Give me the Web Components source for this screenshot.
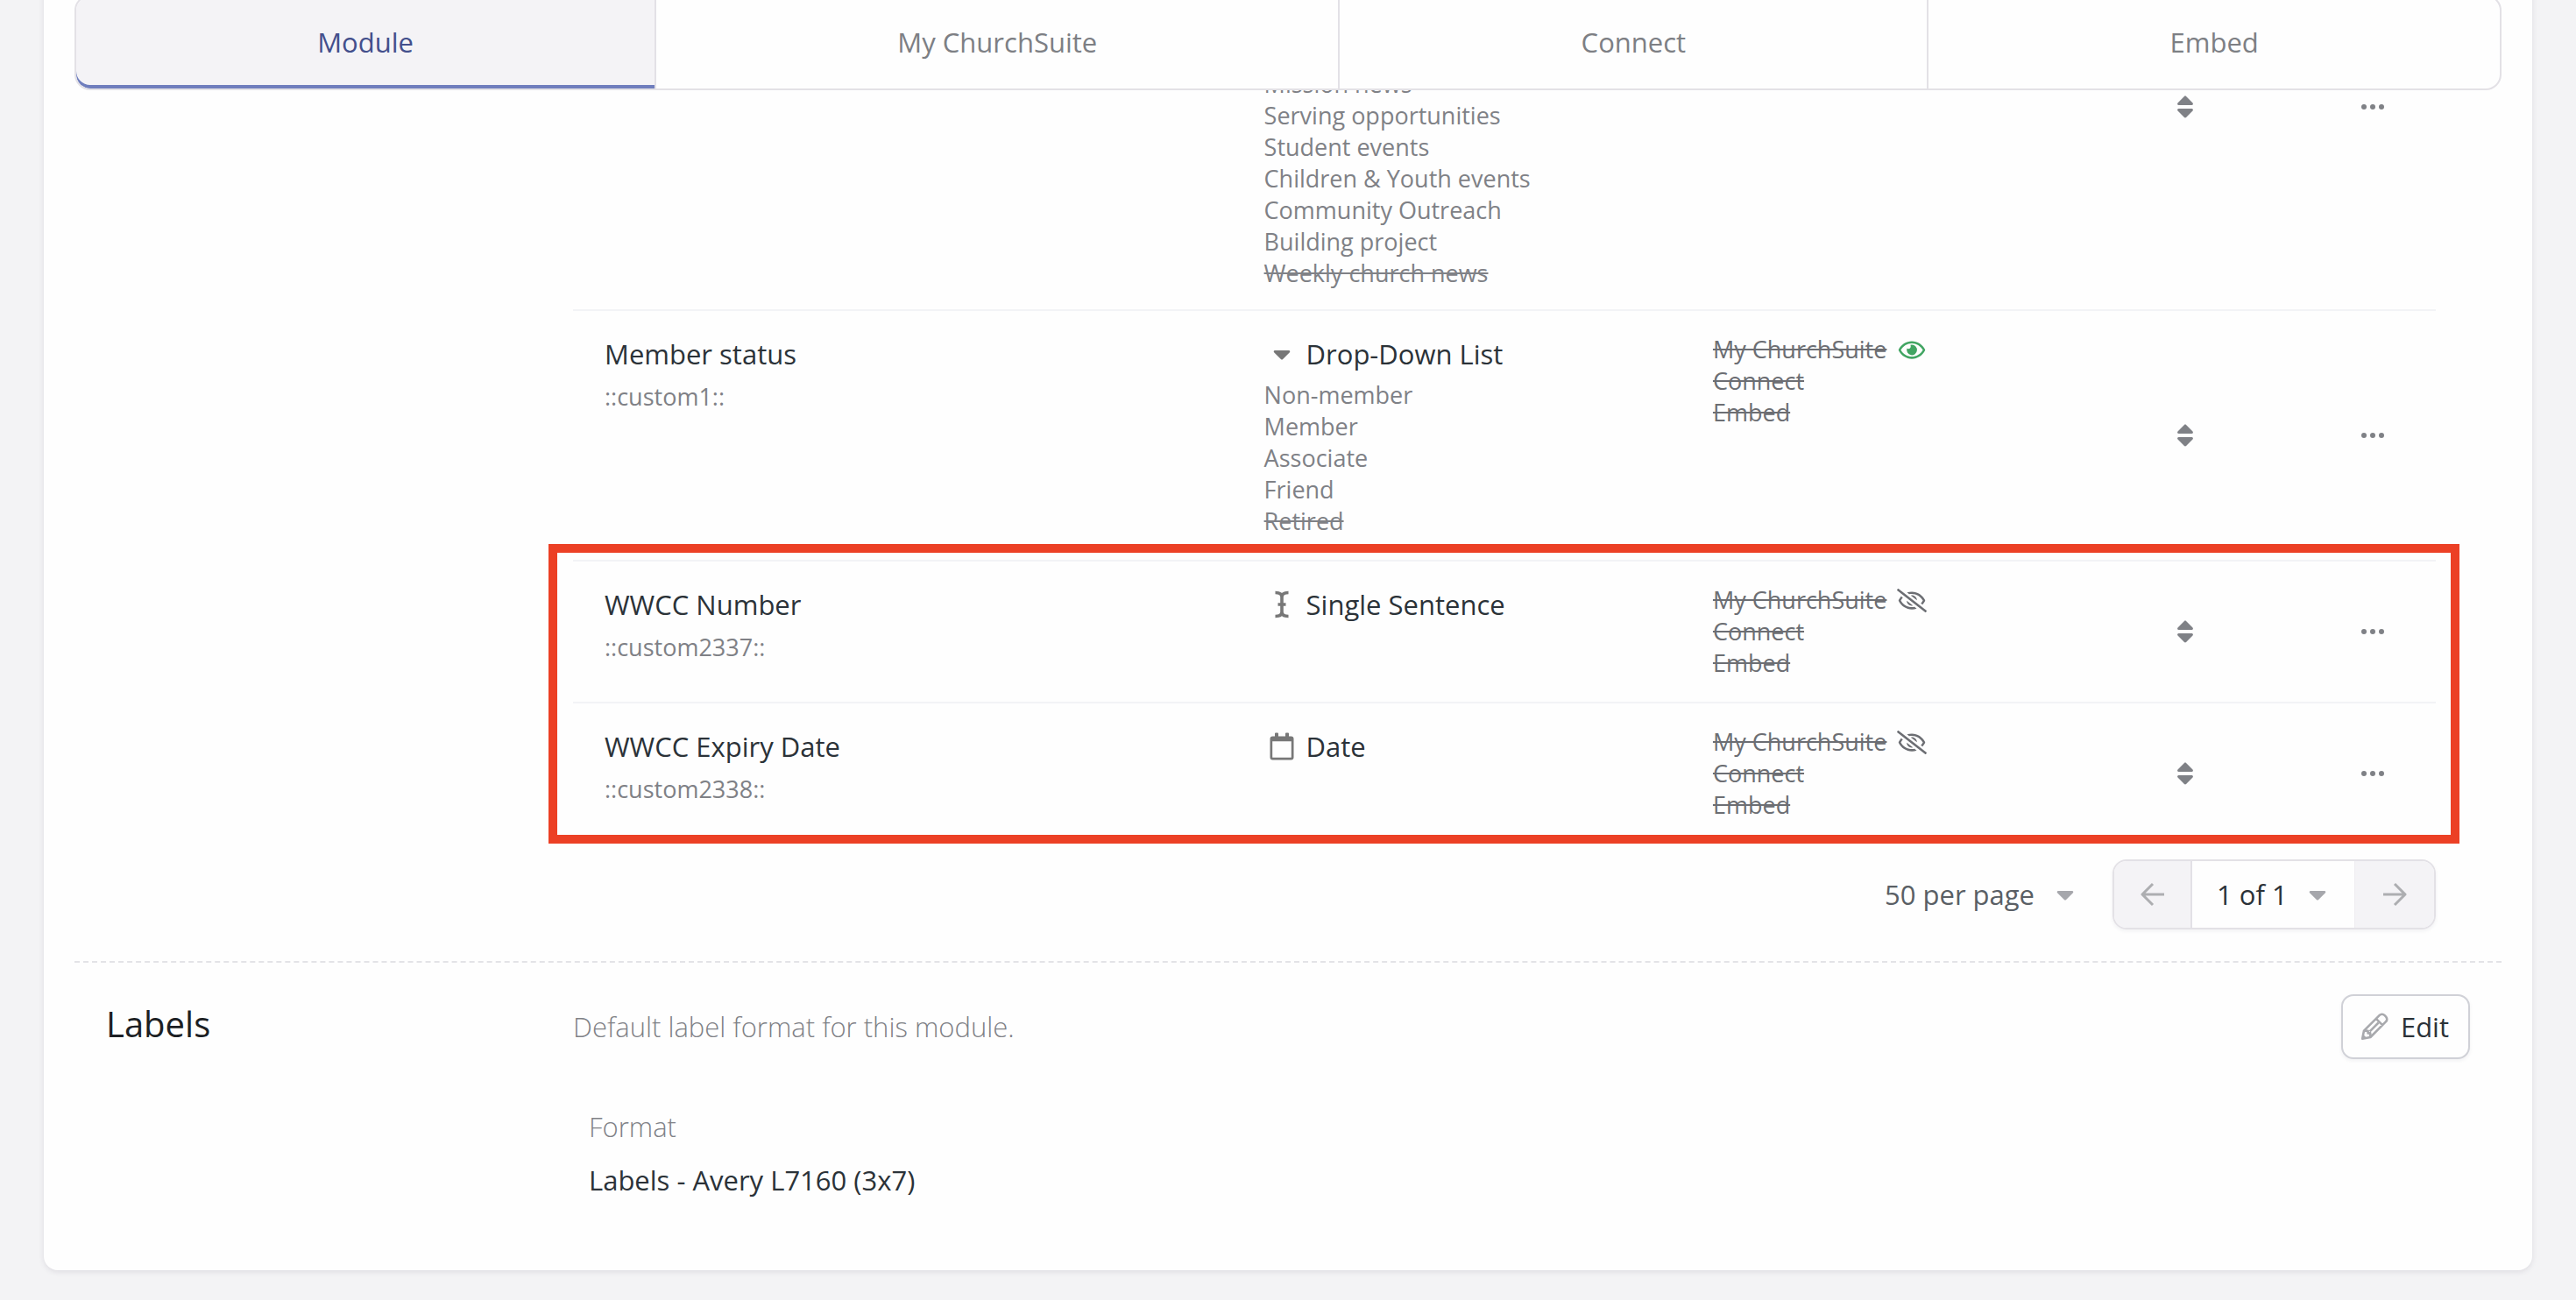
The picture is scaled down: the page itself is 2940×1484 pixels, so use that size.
<!DOCTYPE html>
<html lang="en">
<head>
<meta charset="utf-8">
<title>Module settings</title>
<style>
  :root {
    --page: #f3f3f5;
    --surface: #fefefe;
    --text: #2b3238;
    --heading: #1c1f24;
    --muted: #7f8186;
    --border: #e3e1e6;
    --row-border: #f2f3f6;
    --accent: #6f7ebd;
    --scrolled: 256px;
  }

  body {
    margin: 0;
    display: flex;
    flex-direction: column;
    background: var(--page);
    color: var(--text);
    font: 31px/46px "Open Sans", "Noto Sans", sans-serif;
  }
</style>
</head>
<body>
  <cs-card>
    <cs-tabs>
      <cs-tab selected>Module</cs-tab>
      <cs-tab>My ChurchSuite</cs-tab>
      <cs-tab>Connect</cs-tab>
      <cs-tab>Embed</cs-tab>
    </cs-tabs>
    <cs-section>
      <cs-field-table></cs-field-table>
      <cs-pager></cs-pager>
    </cs-section>
    <cs-section divided>
      <span slot="heading">Labels</span>
      <cs-label-format name="Format" value="Labels - Avery L7160 (3x7)">Default label format for this module.</cs-label-format>
    </cs-section>
  </cs-card>

<script>
const ICONS = {
  caret: [20, 32, '0 0 320 512', '<path d="M31.3 192h257.3c17.8 0 26.7 21.5 14.1 34.1L174.1 354.7c-7.8 7.8-20.5 7.8-28.3 0L17.2 226.1C4.6 213.5 13.5 192 31.3 192z"/>'],
  cursor: [20, 32, '0 0 20 32', '<path d="M2.5 2.5C7 2.5 10 4 10 7.500V24.500C10 28 7 29.500 2.500 29.500M17.500 2.500C13 2.500 10 4 10 7.500M10 24.500C10 28 13 29.500 17.500 29.500M5.500 16H14.500" fill="none" stroke="currentColor" stroke-width="3.600"/>'],
  calendar: [28, 32, '0 0 28 32', '<path fill-rule="evenodd" d="M6 1.500a1 1 0 0 1 1-1h2a1 1 0 0 1 1 1V4.500h8V1.500a1 1 0 0 1 1-1h2a1 1 0 0 1 1 1V4.500h2.500a3 3 0 0 1 3 3V28.500a3 3 0 0 1-3 3H3.500a3 3 0 0 1-3-3V7.500a3 3 0 0 1 3-3H6zM3.200 10.200V28.200a.6.6 0 0 0 .6.6H24.200a.6.6 0 0 0 .6-.6V10.200z"/>'],
  eye: [34, 27, '-32 0 640 512', '<path d="M288 144a110.940 110.940 0 0 0-31.240 5 55.400 55.400 0 0 1 7.240 27 56 56 0 0 1-56 56 55.400 55.400 0 0 1-27-7.240A111.710 111.710 0 1 0 288 144zm284.520 97.400C518.290 135.590 410.930 64 288 64S57.680 135.640 3.480 241.410a32.350 32.350 0 0 0 0 29.190C57.710 376.410 165.070 448 288 448s230.320-71.640 284.520-177.410a32.350 32.350 0 0 0 0-29.190zM288 400c-98.650 0-189.090-55-237.930-144C98.910 167 189.340 112 288 112s189.090 55 237.930 144C477.100 345 386.660 400 288 400z"/>'],
  eyeSlash: [34, 27, '0 0 640 512', '<path d="M634 471L36 3.510A16 16 0 0 0 13.510 6l-10 12.490A16 16 0 0 0 6 41l598 467.490a16 16 0 0 0 22.490-2.490l10-12.490A16 16 0 0 0 634 471zM296.790 146.470l134.790 105.380C429.360 191.910 380.480 144 320 144a112.260 112.260 0 0 0-23.210 2.470zm46.420 219.070L208.420 260.160C210.650 320.090 259.530 368 320 368a113 113 0 0 0 23.210-2.460zM320 112c98.650 0 189.090 55 237.930 144a285.530 285.530 0 0 1-44 60.200l37.740 29.500a333.700 333.700 0 0 0 52.900-75.110 32.350 32.350 0 0 0 0-29.190C550.290 135.590 442.930 64 320 64c-36.700 0-71.710 7-104.630 18.810l46.410 36.290c18.940-4.300 38.340-7.100 58.220-7.100zm0 288c-98.650 0-189.080-55-237.930-144a285.470 285.470 0 0 1 44.050-60.190l-37.740-29.500a333.600 333.600 0 0 0-52.890 75.100 32.350 32.350 0 0 0 0 29.190C89.720 376.410 197.080 448 320 448c36.700 0 71.710-7.050 104.630-18.810l-46.410-36.280C359.280 397.200 339.890 400 320 400z"/>'],
  sort: [20, 32, '0 0 320 512', '<path d="M41 288h238c21.400 0 32.100 25.900 17 41L177 448c-9.400 9.400-24.600 9.400-33.900 0L24 329c-15.100-15.100-4.400-41 17-41zm255-105L177 64c-9.400-9.400-24.600-9.400-33.900 0L24 183c-15.100 15.100-4.400 41 17 41h238c21.400 0 32.100-25.900 17-41z"/>'],
  dots: [28, 8, '0 0 28 8', '<circle cx="4" cy="4" r="3"/><circle cx="14" cy="4" r="3"/><circle cx="24" cy="4" r="3"/>'],
  left: [28, 28, '0 0 28 28', '<path d="M14 2L2 14L14 26M2.500 14H27" fill="none" stroke="currentColor" stroke-width="3" stroke-linejoin="round"/>'],
  right: [28, 28, '0 0 28 28', '<path d="M14 2L26 14L14 26M25.500 14H1" fill="none" stroke="currentColor" stroke-width="3" stroke-linejoin="round"/>'],
  pencil: [32, 32, '0 0 32 32', '<path d="M2.200 29.800L4 20.600L21.800 2.900a4 4 0 0 1 5.600 0l1.700 1.700a4 4 0 0 1 0 5.600L11.400 28z M17.800 6.900L25.100 14.200M20.500 11.500L10.700 21.300M4.500 20.800H8.600V23.400H11.200V27.800" fill="none" stroke="currentColor" stroke-width="2.600" stroke-linejoin="round"/><path d="M1.500 30.500L2.700 24.500L7.500 29.300z"/>']
}

class CsIcon extends HTMLElement {
  constructor() {
    super()
    this.attachShadow({ mode: 'open' })
  }

  connectedCallback() {
    const [width, height, box, shape] = ICONS[this.getAttribute('name')]
    this.shadowRoot.innerHTML = `
      <style>
        :host { display: inline-flex; flex: none; }
        svg { display: block; fill: currentColor; }
      </style>
      <svg width="${width}" height="${height}" viewBox="${box}" aria-hidden="true">${shape}</svg>
    `
  }
}

class CsCard extends HTMLElement {
  constructor() {
    super()
    this.attachShadow({ mode: 'open' })
    this.shadowRoot.innerHTML = `
      <style>
        :host {
          display: block;
          margin: calc(-1 * var(--scrolled)) 50px 24px;
          padding: 0 35px 80px;
          background: var(--surface);
          border-radius: 16px;
          box-shadow: 0 2px 6px rgba(40, 30, 60, 0.1);
        }
      </style>
      <slot></slot>
    `
  }
}

class CsTabs extends HTMLElement {
  constructor() {
    super()
    this.attachShadow({ mode: 'open' })
    this.shadowRoot.innerHTML = `
      <style>
        :host {
          display: flex;
          position: sticky;
          top: -6px;
          z-index: 10;
          overflow: hidden;
          border: 2px solid var(--border);
          border-radius: 18px;
          background: var(--surface);
        }
      </style>
      <slot></slot>
    `
    this.setAttribute('role', 'tablist')
  }
}

class CsTab extends HTMLElement {
  constructor() {
    super()
    this.attachShadow({ mode: 'open' })
    this.shadowRoot.innerHTML = `
      <style>
        :host {
          display: block;
          flex: 1 1 auto;
        }

        :host(:not(:last-child)) {
          border-right: 2px solid var(--border);
        }

        button {
          width: 100%;
          padding: 29px 0 30px;
          border: none;
          background: none;
          color: #7d7f84;
          font: inherit;
          cursor: pointer;
        }

        :host([selected]) button {
          background: #f4f3f6;
          color: #434f8c;
          border-radius: 0 0 0 16px;
          box-shadow: inset 0 -4px var(--accent);
        }
      </style>
      <button type="button" role="tab"><slot></slot></button>
    `
  }

  connectedCallback() {
    const button = this.shadowRoot.querySelector('button')
    button.setAttribute('aria-selected', this.hasAttribute('selected'))
    button.addEventListener('click', this.select.bind(this))
  }

  select() {
    for (const tab of this.parentElement.children) {
      tab.toggleAttribute('selected', tab === this)
      tab.shadowRoot.querySelector('button').setAttribute('aria-selected', tab === this)
    }
  }
}

class CsSection extends HTMLElement {
  constructor() {
    super()
    this.attachShadow({ mode: 'open' })
    this.shadowRoot.innerHTML = `
      <style>
        :host {
          display: grid;
          grid-template-columns: minmax(200px, 533px) minmax(0, 1fr);
          padding: 36px;
        }

        :host([divided]) {
          border-top: 2px dashed #e3e3e7;
          padding-bottom: 0;
        }

        h2 {
          margin: 0;
          color: var(--heading);
          font-size: 40px;
          font-weight: 400;
          line-height: 68px;
        }
      </style>
      <h2><slot name="heading"></slot></h2>
      <div><slot></slot></div>
    `
  }
}

const FIELDS = [
  {
    clipped: true,
    options: ['Mission news', 'Serving opportunities', 'Student events', 'Children &amp; Youth events', 'Community Outreach', 'Building project'],
    disabled: ['Weekly church news']
  },
  {
    name: 'Member status', tag: '::custom1::', icon: 'caret', type: 'Drop-Down List',
    options: ['Non-member', 'Member', 'Associate', 'Friend'],
    disabled: ['Retired'],
    visible: true
  },
  { name: 'WWCC Number', tag: '::custom2337::', icon: 'cursor', type: 'Single Sentence' },
  { name: 'WWCC Expiry Date', tag: '::custom2338::', icon: 'calendar', type: 'Date' }
]

class CsFieldTable extends HTMLElement {
  constructor() {
    super()
    this.attachShadow({ mode: 'open' })
    this.shadowRoot.innerHTML = `
      <style>
        :host {
          display: block;
          position: relative;
          margin-right: 39px;
        }

        table {
          width: 100%;
          table-layout: fixed;
          border-spacing: 0;
        }

        td {
          padding: 26px 36px;
          border-top: 2px solid var(--row-border);
          vertical-align: top;
        }

        /* taller than the options it lists, its upper part is scrolled away */
        tr.clipped td {
          height: 413px;
          padding-bottom: 23px;
          vertical-align: bottom;
        }

        tr td.action {
          padding: 0;
          text-align: center;
          vertical-align: middle;
          color: var(--muted);
        }

        .type {
          display: flex;
          align-items: center;
          gap: 8px;
        }

        .type span {
          display: flex;
          justify-content: center;
          width: 40px;
          color: #777;
        }

        ul, .tag {
          margin: 6px 0 0;
          padding: 0;
          list-style: none;
          color: var(--muted);
          font-size: 27px;
          line-height: 36px;
        }

        .tag {
          margin-top: 8px;
        }

        .places {
          margin: 0;
          color: #6c6e73;
        }

        .places li {
          display: flex;
          align-items: center;
          gap: 12px;
        }

        .places cs-icon[name="eye"] {
          color: #41a562;
        }

        button {
          display: inline-flex;
          padding: 12px;
          border: none;
          background: none;
          color: inherit;
          vertical-align: middle;
          cursor: pointer;
        }

        .action {
          line-height: 0;
        }

        #highlight {
          position: absolute;
          left: -28px;
          right: -27px;
          bottom: 0;
          height: 342px;
          box-sizing: border-box;
          border: 10px solid #ec4025;
          pointer-events: none;
        }
      </style>
      <table>
        <colgroup>
          <col style="width: 35.4%">
          <col style="width: 24.1%">
          <col style="width: 20.4%">
          <col style="width: 13.3%">
          <col style="width: 6.8%">
        </colgroup>
        <tbody>${FIELDS.map(field => this.row(field)).join('')}</tbody>
      </table>
      <div id="highlight"></div>
    `
  }

  row(field) {
    const { clipped, name, tag, icon, type, options = [], disabled = [], visible } = field
    const items = options.map(option => `<li>${option}</li>`)
      .concat(disabled.map(option => `<li><s>${option}</s></li>`))
    return `
      <tr class="${clipped ? 'clipped' : ''}">
        <td>${name ? `<div>${name}</div><div class="tag">${tag}</div>` : ''}</td>
        <td>
          ${type ? `<div class="type"><span><cs-icon name="${icon}"></cs-icon></span>${type}</div>` : ''}
          ${items.length ? `<ul>${items.join('')}</ul>` : ''}
        </td>
        <td>${clipped ? '' : `
          <ul class="places">
            <li><s>My ChurchSuite</s><cs-icon name="${visible ? 'eye' : 'eyeSlash'}"></cs-icon></li>
            <li><s>Connect</s></li>
            <li><s>Embed</s></li>
          </ul>`}
        </td>
        <td class="action"><button type="button" aria-label="Reorder"><cs-icon name="sort"></cs-icon></button></td>
        <td class="action"><button type="button" aria-label="More"><cs-icon name="dots"></cs-icon></button></td>
      </tr>
    `
  }
}

class CsPager extends HTMLElement {
  constructor() {
    super()
    this.attachShadow({ mode: 'open' })
    this.shadowRoot.innerHTML = `
      <style>
        :host {
          display: flex;
          justify-content: flex-end;
          align-items: center;
          gap: 44px;
          margin: 18px 39px 0 0;
        }

        label {
          display: grid;
          align-items: center;
          color: #a6a7ac;
        }

        select, cs-icon {
          grid-area: 1 / 1;
        }

        cs-icon {
          justify-self: end;
          pointer-events: none;
        }

        select {
          appearance: none;
          padding: 0 44px 0 0;
          border: none;
          background: none;
          color: #5a5f65;
          font: inherit;
        }

        #pages {
          display: flex;
          box-sizing: border-box;
          height: 80px;
          overflow: hidden;
          border: 2px solid var(--border);
          border-radius: 16px;
          box-shadow: 0 2px 4px rgba(40, 30, 60, 0.06);
        }

        #pages label {
          padding: 0 32px 0 28px;
          background: var(--surface);
        }

        #pages select {
          color: var(--text);
        }

        button {
          display: flex;
          align-items: center;
          justify-content: center;
          width: 89px;
          padding: 0;
          border: none;
          background: #f4f3f6;
          color: #adaeb1;
        }

        #prev {
          border-right: 2px solid var(--border);
        }

        #next {
          width: 91px;
          border-left: 1px solid #eeedf1;
        }
      </style>
      <label>
        <select aria-label="Items per page"><option>50 per page</option></select>
        <cs-icon name="caret"></cs-icon>
      </label>
      <div id="pages">
        <button type="button" id="prev" aria-label="Previous page" disabled><cs-icon name="left"></cs-icon></button>
        <label>
          <select aria-label="Page"><option>1 of 1</option></select>
          <cs-icon name="caret"></cs-icon>
        </label>
        <button type="button" id="next" aria-label="Next page" disabled><cs-icon name="right"></cs-icon></button>
      </div>
    `
  }
}

class CsLabelFormat extends HTMLElement {
  constructor() {
    super()
    this.attachShadow({ mode: 'open' })
    this.shadowRoot.innerHTML = `
      <style>
        :host { display: block; }

        header {
          display: flex;
          align-items: center;
          justify-content: space-between;
        }

        p, dt {
          margin: 0;
          color: var(--muted);
          font-weight: 300;
        }

        button {
          display: flex;
          align-items: center;
          gap: 14px;
          height: 74px;
          padding: 0 22px 0 20px;
          border: 2px solid #d0d1d7;
          border-radius: 14px;
          background: var(--surface);
          box-shadow: 0 2px 4px rgba(40, 30, 60, 0.06);
          color: var(--text);
          font: inherit;
          cursor: pointer;
        }

        cs-icon { color: #a8a9ad; }

        dl { margin: 54px 18px 0; }

        dd { margin: 15px 0 0; }
      </style>
      <header>
        <p><slot></slot></p>
        <button type="button"><cs-icon name="pencil"></cs-icon>Edit</button>
      </header>
      <dl>
        <dt></dt>
        <dd></dd>
      </dl>
    `
  }

  connectedCallback() {
    this.shadowRoot.querySelector('dt').textContent = this.getAttribute('name')
    this.shadowRoot.querySelector('dd').textContent = this.getAttribute('value')
  }
}

customElements.define('cs-icon', CsIcon)
customElements.define('cs-card', CsCard)
customElements.define('cs-tabs', CsTabs)
customElements.define('cs-tab', CsTab)
customElements.define('cs-section', CsSection)
customElements.define('cs-field-table', CsFieldTable)
customElements.define('cs-pager', CsPager)
customElements.define('cs-label-format', CsLabelFormat)
</script>
</body>
</html>
